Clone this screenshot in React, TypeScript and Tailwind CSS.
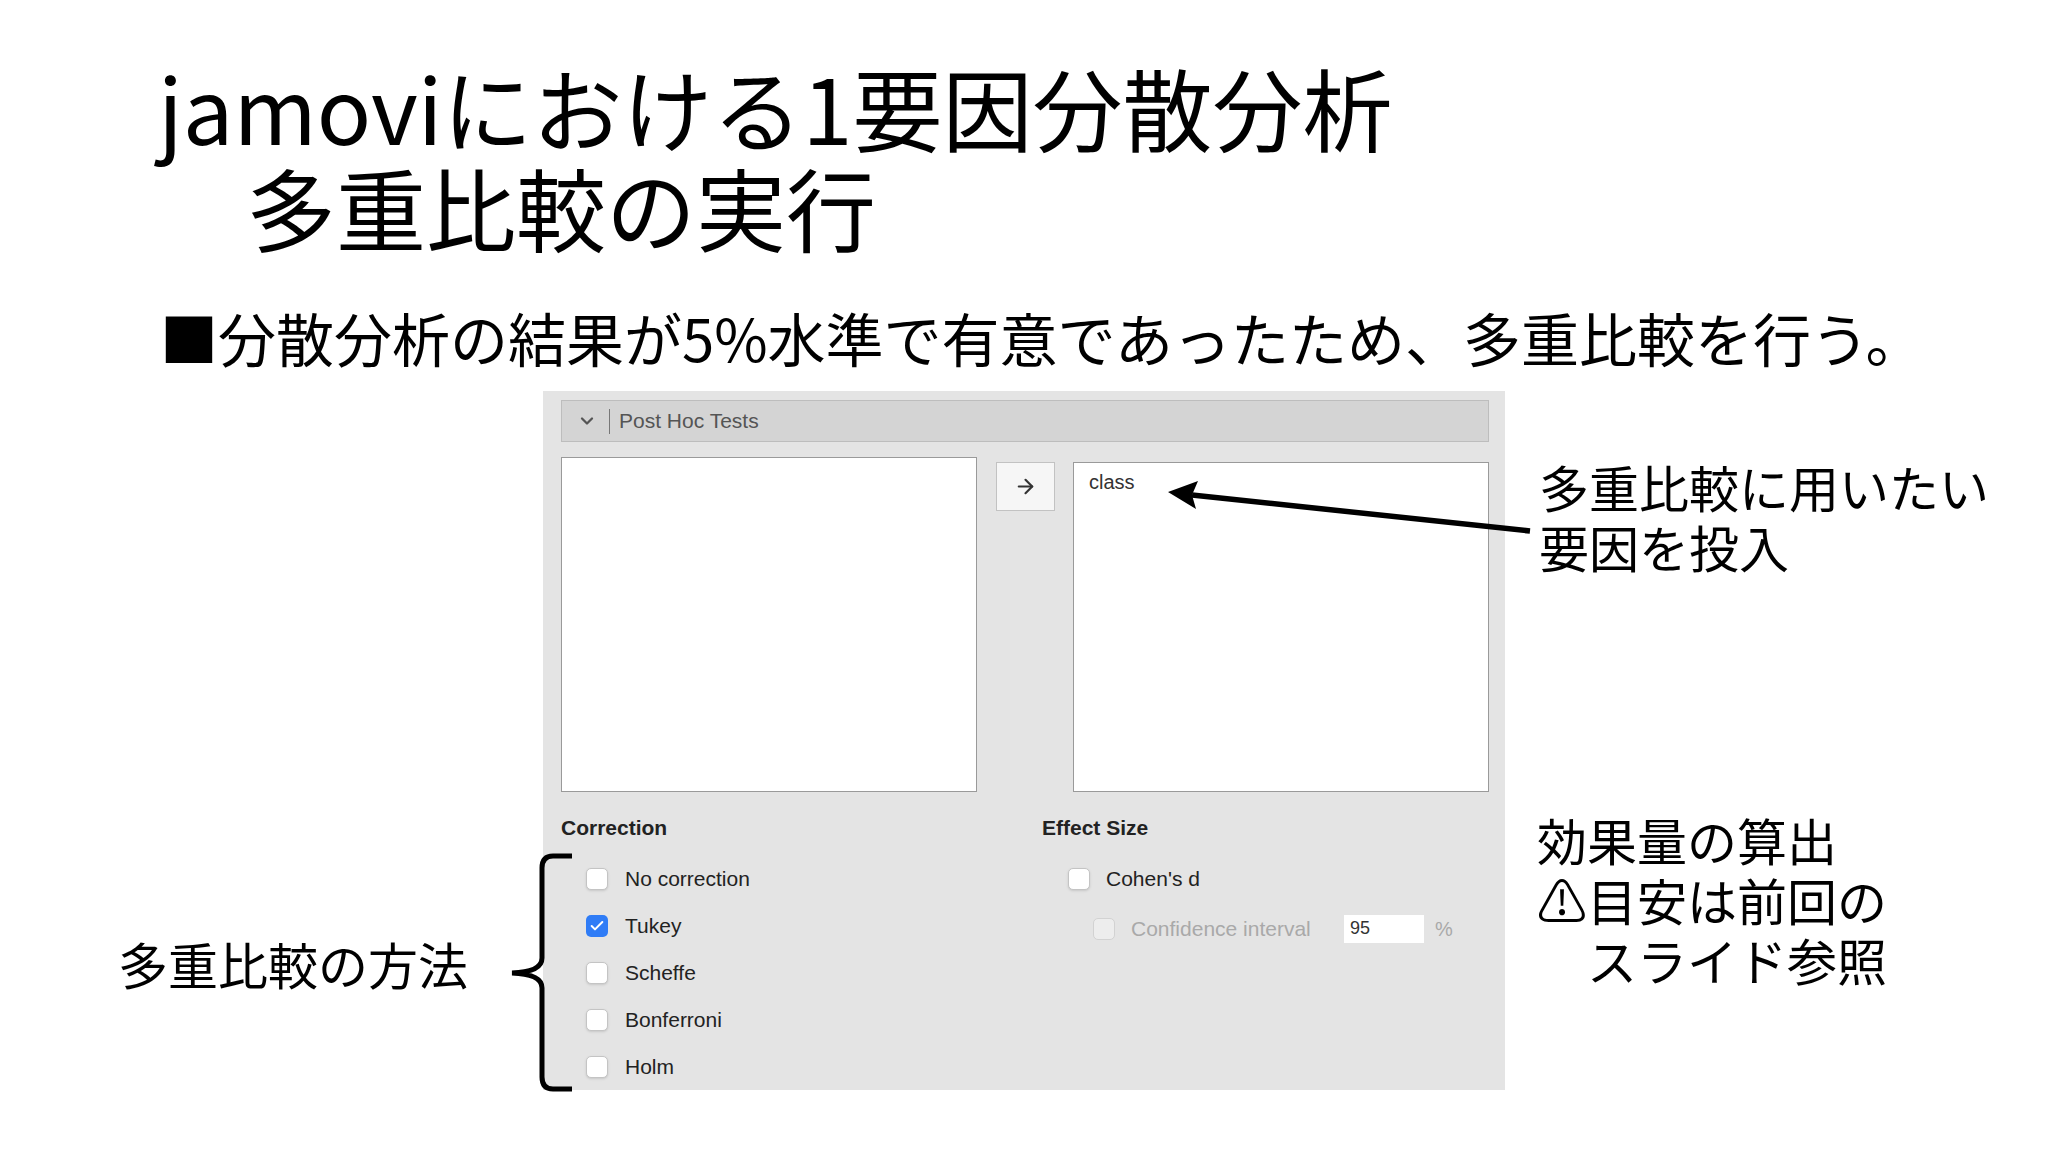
import { Check, ChevronDown, ArrowRight } from 'lucide-react';

function Box({ checked = false, disabled = false }: { checked?: boolean; disabled?: boolean }) {
  if (checked) {
    return (
      <div className="w-[22px] h-[22px] rounded-[5px] bg-[#2f7cf6] flex items-center justify-center shrink-0">
        <Check size={16} strokeWidth={3} color="#ffffff" />
      </div>
    );
  }
  return (
    <div
      className={
        disabled
          ? 'w-[22px] h-[22px] rounded-[5px] bg-[#ededed] border border-[#d2d2d2] shrink-0'
          : 'w-[22px] h-[22px] rounded-[5px] bg-white border border-[#c4c4c4] shadow-sm shrink-0'
      }
    />
  );
}

function Row({ label, checked }: { label: string; checked?: boolean }) {
  return (
    <div className="h-[47px] flex items-center pl-[25px]">
      <Box checked={checked} />
      <span className="ml-[17px] text-[21px] text-[#222222]">{label}</span>
    </div>
  );
}

export default function App() {
  return (
    <div className="relative w-[2048px] h-[1152px] overflow-hidden bg-white text-black font-['Noto_Sans_CJK_JP',sans-serif]">
      {/* title */}
      <div className="pl-[158px] pt-[56px] text-[90px] leading-[100px] whitespace-nowrap">
        <div>jamoviにおける1要因分散分析</div>
        <div className="pl-[88px]">多重比較の実行</div>
      </div>

      <div className="mt-[46px] pl-[160px] text-[58px] leading-[70px] whitespace-nowrap">
        ■分散分析の結果が5%水準で有意であったため、多重比較を行う。
      </div>

      <div className="mt-[19px] flex items-start">
        {/* left note */}
        <div className="w-[543px] h-[698px] flex flex-col justify-end pl-[118px] pb-[96px] text-[50px] leading-[60px] whitespace-nowrap">
          多重比較の方法
        </div>

        {/* jamovi panel */}
        <div className="w-[962px] bg-[#e4e4e4] pl-[18px] pr-[16px] pt-[9px] font-['Liberation_Sans',Arial,sans-serif]">
          <div className="h-[42px] bg-[#d4d4d4] border border-[#bdbdbd] flex items-center pl-[15px]">
            <ChevronDown size={20} strokeWidth={2.75} color="#555555" />
            <div className="w-px h-[25px] bg-[#777777] ml-[12px]" />
            <span className="ml-[9px] text-[21px] text-[#555555]">Post Hoc Tests</span>
          </div>

          <div className="mt-[15px] flex items-start">
            <div className="w-[416px] h-[335px] bg-white border border-[#9a9a9a]" />
            <div className="ml-[19px] mt-[5px] w-[59px] h-[49px] bg-[#f6f6f6] border border-[#c2c2c2] flex items-center justify-center">
              <ArrowRight size={23} strokeWidth={2.25} color="#333333" />
            </div>
            <div className="ml-[18px] mt-[5px] w-[416px] h-[330px] bg-white border border-[#9a9a9a] pl-[15px] pt-[4px]">
              <span className="text-[20px] text-[#333333]">class</span>
            </div>
          </div>

          <div className="mt-[22px] grid grid-cols-[481px_1fr]">
            <div>
              <div className="h-[28px] leading-[28px] text-[21px] font-bold text-[#222222]">Correction</div>
              <div className="mt-[13px]">
                <Row label="No correction" />
                <Row label="Tukey" checked />
                <Row label="Scheffe" />
                <Row label="Bonferroni" />
                <Row label="Holm" />
              </div>
            </div>
            <div>
              <div className="h-[28px] leading-[28px] text-[21px] font-bold text-[#222222]">Effect Size</div>
              <div className="mt-[13px]">
                <div className="h-[47px] flex items-center pl-[26px]">
                  <Box />
                  <span className="ml-[16px] text-[21px] text-[#222222]">Cohen's d</span>
                </div>
                <div className="mt-[3px] h-[47px] flex items-center pl-[51px]">
                  <Box disabled />
                  <span className="ml-[16px] w-[213px] text-[21px] text-[#a9a9a9]">Confidence interval</span>
                  <div className="w-[80px] h-[28px] bg-white pl-[6px] flex items-center text-[18px] text-[#333333]">95</div>
                  <span className="ml-[11px] text-[20px] text-[#a9a9a9]">%</span>
                </div>
              </div>
            </div>
          </div>
        </div>

        {/* right notes */}
        <div className="pl-[32px] pt-[65px] text-[50px] leading-[60px] whitespace-nowrap">
          <div className="pl-[2px]">
            <div>多重比較に用いたい</div>
            <div>要因を投入</div>
          </div>
          <div className="mt-[233px]">
            <div>効果量の算出</div>
            <div>⚠目安は前回の</div>
            <div>　スライド参照</div>
          </div>
        </div>
      </div>

      {/* callout arrow and brace drawn over the panel */}
      <svg className="absolute left-0 top-0 pointer-events-none" width="2048" height="1152" viewBox="0 0 2048 1152">
        <line x1="1530" y1="531" x2="1192" y2="495" stroke="#000" strokeWidth="5.5" />
        <polygon points="1168,492 1198,481 1192,495 1196,509" fill="#000" />
        <path
          d="M572,856 H553 Q542,856 542,868 V958 Q542,972 512,973 Q542,974 542,988 V1077 Q542,1089 553,1089 H572"
          fill="none"
          stroke="#000"
          strokeWidth="5"
        />
      </svg>
    </div>
  );
}
